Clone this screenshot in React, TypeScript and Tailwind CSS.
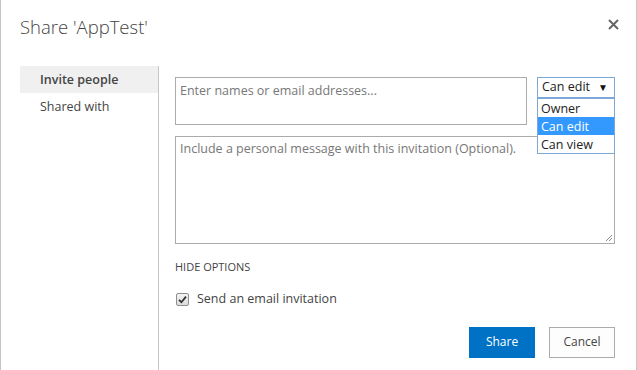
import React from 'react';

const font = "font-['Open_Sans','Noto_Sans',sans-serif]";

const CheckBox: React.FC = () => (
  <span className="w-[13px] h-[13px] border border-[#8f8f8f] rounded-[2px] bg-gradient-to-b from-[#f4f4f4] to-[#dcdcdc] flex items-center justify-center">
    <svg width="9" height="9" viewBox="0 0 9 9">
      <path d="M1 4.8 L3.4 7.2 L8 1.6" fill="none" stroke="#333" strokeWidth="1.8" />
    </svg>
  </span>
);

const App: React.FC = () => {
  return (
    <div className={`w-[637px] h-[370px] bg-white border-l border-r border-[#c6c6c6] flex flex-col overflow-hidden text-[#444] ${font}`}>
      <div className="flex items-start justify-between pl-[19px] pr-[14px] pt-[14px] h-[66px]">
        <h1 className="text-[18.5px] font-light leading-[26px] text-[#444]">Share 'AppTest'</h1>
        <button className="mt-[1px] w-[18px] h-[18px] flex items-center justify-center">
          <svg width="11" height="11" viewBox="0 0 11 11">
            <path d="M1 1 L10 10 M10 1 L1 10" stroke="#666" strokeWidth="2" />
          </svg>
        </button>
      </div>
      <div className="flex flex-1">
        <nav className="w-[139px] ml-[19px] border-r border-[#c6c6c6] text-[12.5px]">
          <div className="h-[27px] bg-[#f0f0f0] pl-[20px] pt-[2px] flex items-center font-semibold">Invite people</div>
          <div className="h-[27px] pl-[20px] pt-[2px] flex items-center">Shared with</div>
        </nav>
        <main className="pl-[16px] pt-[11px] w-[456px] flex flex-col">
          <div className="flex gap-[10px]">
            <div className="w-[352px] h-[48px] border border-[#ababab] px-[4px] pt-[4px] text-[12.5px] text-[#777]">
              Enter names or email addresses...
            </div>
            <div className="relative">
              <div className="w-[78px] h-[21px] border border-[#7da7d9] flex items-center justify-between pl-[4px] pr-[6px] text-[12.5px] text-[#222]">
                <span>Can edit</span>
                <span className="text-[10px] text-[#111]">▼</span>
              </div>
              <ul className="absolute top-[21px] left-0 w-[78px] border border-[#7da7d9] bg-white text-[12.5px] text-[#222] z-10">
                <li className="h-[18px] leading-[19px] pl-[3px]">Owner</li>
                <li className="h-[18px] leading-[19px] pl-[3px] bg-[#3399ff] text-white">Can edit</li>
                <li className="h-[18px] leading-[19px] pl-[3px]">Can view</li>
              </ul>
            </div>
          </div>
          <div className="mt-[11px] w-[440px] h-[108px] border border-[#ababab] px-[4px] pt-[3px] text-[12.5px] text-[#777] relative">
            Include a personal message with this invitation (Optional).
            <svg className="absolute right-[1px] bottom-[1px]" width="8" height="8" viewBox="0 0 8 8">
              <path d="M7 1 L1 7 M7 4 L4 7" stroke="#888" strokeWidth="1" />
            </svg>
          </div>
          <div className="mt-[15px] text-[11px] leading-[16px] uppercase text-[#444]">Hide options</div>
          <label className="mt-[15px] flex items-center gap-[8px] pl-[1px] text-[12.5px]">
            <CheckBox />
            <span>Send an email invitation</span>
          </label>
          <div className="mt-[18px] flex justify-end gap-[14px] w-[440px]">
            <button className="w-[66px] h-[31px] bg-[#0072c6] text-white text-[12px]">Share</button>
            <button className="w-[66px] h-[31px] border border-[#ababab] bg-[#fdfdfd] text-[#444] text-[12px]">Cancel</button>
          </div>
        </main>
      </div>
    </div>
  );
};

export default App;
